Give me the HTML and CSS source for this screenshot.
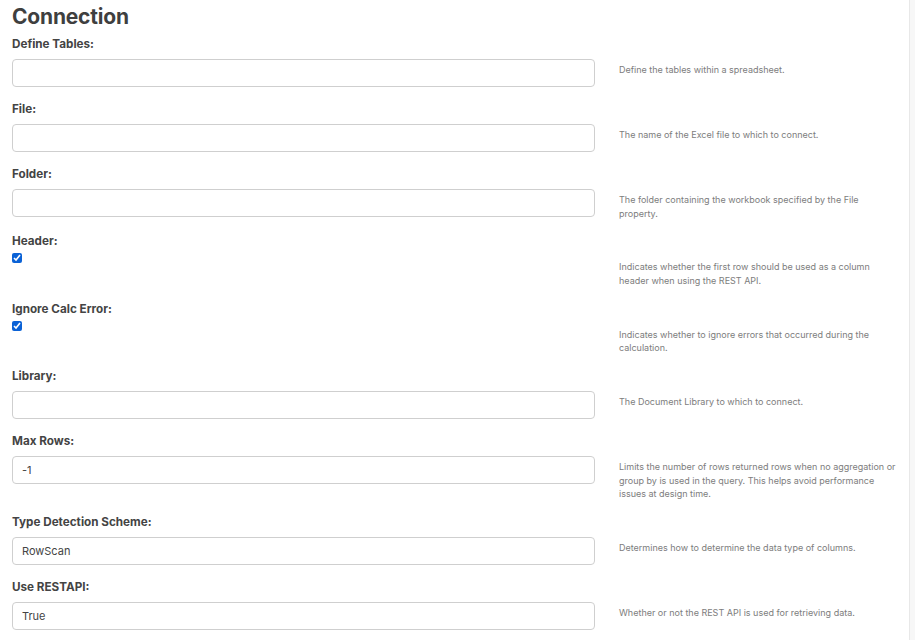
FILE: index.html
```html
<!DOCTYPE html>
<html>
<head>
<meta charset="utf-8">
<link rel="stylesheet" href="styles.css">
</head>
<body>
<div class="page">
  <main class="content">
    <h1 class="title">Connection</h1>

    <div class="field">
      <div class="control">
        <label class="label">Define Tables:</label>
        <input class="input" type="text" value="">
      </div>
      <p class="desc">Define the tables within a spreadsheet.</p>
    </div>

    <div class="field">
      <div class="control">
        <label class="label">File:</label>
        <input class="input" type="text" value="">
      </div>
      <p class="desc">The name of the Excel file to which to connect.</p>
    </div>

    <div class="field">
      <div class="control">
        <label class="label">Folder:</label>
        <input class="input" type="text" value="">
      </div>
      <p class="desc">The folder containing the workbook specified by the File property.</p>
    </div>

    <div class="field">
      <div class="control check-control">
        <label class="label">Header:</label>
        <input class="check" type="checkbox" checked>
      </div>
      <p class="desc">Indicates whether the first row should be used as a column header when using the REST API.</p>
    </div>

    <div class="field">
      <div class="control check-control">
        <label class="label">Ignore Calc Error:</label>
        <input class="check" type="checkbox" checked>
      </div>
      <p class="desc">Indicates whether to ignore errors that occurred during the calculation.</p>
    </div>

    <div class="field">
      <div class="control">
        <label class="label">Library:</label>
        <input class="input" type="text" value="">
      </div>
      <p class="desc">The Document Library to which to connect.</p>
    </div>

    <div class="field">
      <div class="control">
        <label class="label">Max Rows:</label>
        <input class="input" type="text" value="-1">
      </div>
      <p class="desc">Limits the number of rows returned rows when no aggregation or group by is used in the query. This helps avoid performance issues at design time.</p>
    </div>

    <div class="field">
      <div class="control">
        <label class="label">Type Detection Scheme:</label>
        <input class="input" type="text" value="RowScan">
      </div>
      <p class="desc">Determines how to determine the data type of columns.</p>
    </div>

    <div class="field">
      <div class="control">
        <label class="label">Use RESTAPI:</label>
        <input class="input" type="text" value="True">
      </div>
      <p class="desc">Whether or not the REST API is used for retrieving data.</p>
    </div>
  </main>
  <div class="rail"></div>
</div>
</body>
</html>
```

FILE: styles.css
```css
* { box-sizing: border-box; }
html, body {
  margin: 0;
  padding: 0;
  background: #ffffff;
  height: 640px;
  overflow: hidden;
}
body {
  font-family: Inter, "Noto Sans", sans-serif;
  color: #444444;
}
.page {
  display: flex;
  width: 915px;
  height: 640px;
}
.content {
  flex: 1;
  padding: 0 10px 0 12px;
}
.rail {
  width: 6px;
  border-left: 1px solid #e8e8e8;
  background: #f7f7f7;
}
.title {
  margin: 5px 0 7px 0;
  font-size: 21px;
  line-height: 24px;
  font-weight: 700;
  color: #3f3f3f;
  letter-spacing: -0.2px;
}
.field {
  display: grid;
  grid-template-columns: 583px 1fr;
  column-gap: 24px;
  margin-bottom: 14px;
}
.control {
  display: flex;
  flex-direction: column;
  align-items: flex-start;
}
.check-control {
  min-height: 53.5px;
}
.label {
  display: block;
  font-size: 11.7px;
  line-height: 16px;
  font-weight: 700;
  color: #444444;
  margin-bottom: 7px;
}
.input {
  width: 100%;
  height: 28px;
  border: 1px solid #cfcfcf;
  border-radius: 4px;
  padding: 0 9px;
  font-family: Inter, "Noto Sans", sans-serif;
  font-size: 11px;
  color: #444444;
  background: #ffffff;
  outline: none;
}
.check {
  margin: -3px 0 0 0;
  width: 10px;
  height: 10px;
  accent-color: #0b62d6;
}
.desc {
  margin: 0 0 -1px 0;
  padding-top: 27px;
  font-size: 9px;
  line-height: 13.5px;
  color: #7d7d7d;
}
```
